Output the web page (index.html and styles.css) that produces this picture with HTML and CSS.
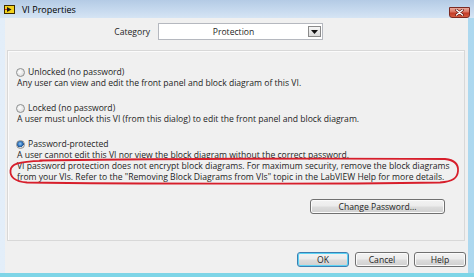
FILE: index.html
```html
<!DOCTYPE html>
<html>
<head>
<meta charset="utf-8">
<link rel="stylesheet" href="styles.css">
</head>
<body>
<div class="window">
  <div class="titlebar">
    <svg class="app-icon" width="11" height="9" viewBox="0 0 11 9">
      <rect x="0.5" y="0.5" width="10" height="8" fill="#f3d21c" stroke="#3a2a00"/>
      <path d="M3 2 L7.5 4.5 L3 7 Z" fill="#1a1a1a"/>
      <path d="M1 4.5 H3" stroke="#d6241b" stroke-width="1.2"/>
    </svg>
    <span class="title">VI Properties</span>
    <span class="close">
      <svg width="9" height="7" viewBox="0 0 9 7">
        <path d="M1.5 1 L7.5 6 M7.5 1 L1.5 6" stroke="#5a1410" stroke-width="2.6" stroke-linecap="round"/>
        <path d="M1.5 1 L7.5 6 M7.5 1 L1.5 6" stroke="#ffffff" stroke-width="1.4" stroke-linecap="round"/>
      </svg>
    </span>
  </div>
  <div class="client">
    <div class="category-row">
      <span class="cat-label">Category</span>
      <div class="select">
        <span class="select-value">Protection</span>
        <span class="select-arrow">
          <svg width="7" height="4" viewBox="0 0 7 4"><path d="M0 0 H7 L3.5 4 Z" fill="#111"/></svg>
        </span>
      </div>
    </div>
    <div class="panel">
      <div class="option">
        <div class="radio-line"><span class="radio"></span>Unlocked (no password)</div>
        <div class="desc">Any user can view and edit the front panel and block diagram of this VI.</div>
      </div>
      <div class="option">
        <div class="radio-line"><span class="radio"></span>Locked (no password)</div>
        <div class="desc">A user must unlock this VI (from this dialog) to edit the front panel and block diagram.</div>
      </div>
      <div class="option">
        <div class="radio-line"><span class="radio checked"></span>Password-protected</div>
        <div class="desc">A user cannot edit this VI nor view the block diagram without the correct password.</div>
        <div class="desc">VI password protection does not encrypt block diagrams. For maximum security, remove the block diagrams</div>
        <div class="desc">from your VIs. Refer to the "Removing Block Diagrams from VIs" topic in the LabVIEW Help for more details.</div>
      </div>
      <div class="change-row">
        <button class="btn btn-change">Change Password...</button>
      </div>
      <svg class="annotation" viewBox="8 51 457 189" width="457" height="189">
        <path d="M40 160.5 C 130 158.8, 340 158, 445 159 C 455 160, 458.5 164.5, 458 171 C 457.5 178, 453 181.5, 440 182.5 C 330 184.3, 120 183.8, 27 182.5 C 14 181.5, 10 176.5, 10.5 170.5 C 11 164.5, 17 161.5, 42 160.8" fill="none" stroke="#d71e2b" stroke-width="1.8" stroke-linecap="round"/>
      </svg>
    </div>
    <div class="footer">
      <button class="btn btn-ok">OK</button>
      <button class="btn btn-cancel">Cancel</button>
      <button class="btn btn-help">Help</button>
    </div>
  </div>
</div>
</body>
</html>
```

FILE: styles.css
```css
* { box-sizing: border-box; }
html, body { margin: 0; padding: 0; }
body {
  width: 474px;
  height: 277px;
  overflow: hidden;
  background: #ffffff;
  font-family: "Open Sans", "Noto Sans", sans-serif;
  font-size: 8.6px;
  color: #1e1e1e;
}
.window {
  height: 277px;
  display: flex;
  flex-direction: column;
  background: linear-gradient(to right, #e3eef9 0%, #d5e5f4 50%, #acd8ef 100%);
  border-bottom: 4px solid #7ed5e7;
}
.titlebar {
  flex: none;
  height: 18px;
  display: flex;
  align-items: center;
  padding: 0 4px 0 4px;
  background: linear-gradient(#b4cbe5 0%, #c6d9ee 55%, #d6e5f4 100%);
}
.app-icon { display: block; }
.title {
  margin-left: 7px;
  font-size: 9px;
  color: #000;
}
.close {
  margin-left: auto;
  margin-top: 6px;
  width: 21px;
  height: 11px;
  border: 1px solid #7b2a22;
  border-radius: 0 0 3px 3px;
  background: linear-gradient(#e9a99c 0%, #d9725f 45%, #c23a26 55%, #d55b3f 100%);
  display: flex;
  align-items: center;
  justify-content: center;
}
.close svg { display: block; }
.client {
  flex: 1;
  margin: 0 6px 0 5px;
  background: #f0f0f0;
  display: flex;
  flex-direction: column;
}
.category-row {
  display: flex;
  align-items: center;
  padding-top: 5px;
}
.cat-label {
  width: 153px;
  padding-right: 8px;
  text-align: right;
}
.select {
  width: 165px;
  height: 17px;
  border: 1px solid #b5b8bf;
  background: #ffffff;
  display: flex;
  align-items: center;
}
.select-value {
  flex: 1;
  text-align: center;
}
.select-arrow {
  width: 13px;
  height: 11px;
  margin-right: 1px;
  border: 1px solid #8a8a8a;
  background: linear-gradient(#f6f6f6, #dadada);
  display: flex;
  align-items: center;
  justify-content: center;
}
.select-arrow svg { display: block; }
.panel {
  position: relative;
  flex: 1;
  margin: 10px 3px 0 2px;
  border: 1px solid #d8d8d8;
  box-shadow: inset 1px 1px 0 #fbfbfb;
  padding: 16px 0 0 8px;
}
.option { margin-bottom: 14px; }
.option:last-of-type { margin-bottom: 0; }
.radio-line {
  display: flex;
  align-items: center;
  height: 11px;
  line-height: 11px;
  white-space: nowrap;
}
.radio {
  flex: none;
  width: 9px;
  height: 9px;
  margin-right: 3px;
  border-radius: 50%;
  border: 1px solid #8e9090;
  background: radial-gradient(circle at 40% 40%, #ffffff 0%, #e6e6e6 55%, #cfcfcf 100%);
}
.radio.checked {
  background: radial-gradient(circle at 45% 40%, #9fd0f5 0%, #3a7ec6 35%, #1f4f8c 60%, #dcdcdc 62%, #eeeeee 100%);
}
.desc {
  padding-left: 1px;
  height: 11px;
  line-height: 11px;
  white-space: nowrap;
}
.change-row {
  display: flex;
  justify-content: flex-end;
  padding-right: 19px;
  margin-top: 16px;
}
.btn {
  height: 15px;
  padding: 0;
  border: 1px solid #707070;
  border-radius: 3px;
  background: linear-gradient(#f3f3f3 0%, #ebebeb 48%, #dddddd 52%, #cfcfcf 100%);
  box-shadow: inset 0 0 0 1px #fbfbfb;
  font-family: inherit;
  font-size: 8.6px;
  line-height: 12px;
  color: #1e1e1e;
}
.btn-change { width: 135px; }
.annotation {
  position: absolute;
  left: 0;
  top: 0;
  pointer-events: none;
}
.footer {
  display: flex;
  justify-content: flex-end;
  padding: 11px 2px 6px 0;
}
.btn-ok {
  width: 52px;
  border-color: #3c7fb1;
  box-shadow: inset 0 0 0 1px #5bd3f5;
}
.btn-cancel { width: 54px; margin-left: 6px; }
.btn-help { width: 52px; margin-left: 5px; }
```
